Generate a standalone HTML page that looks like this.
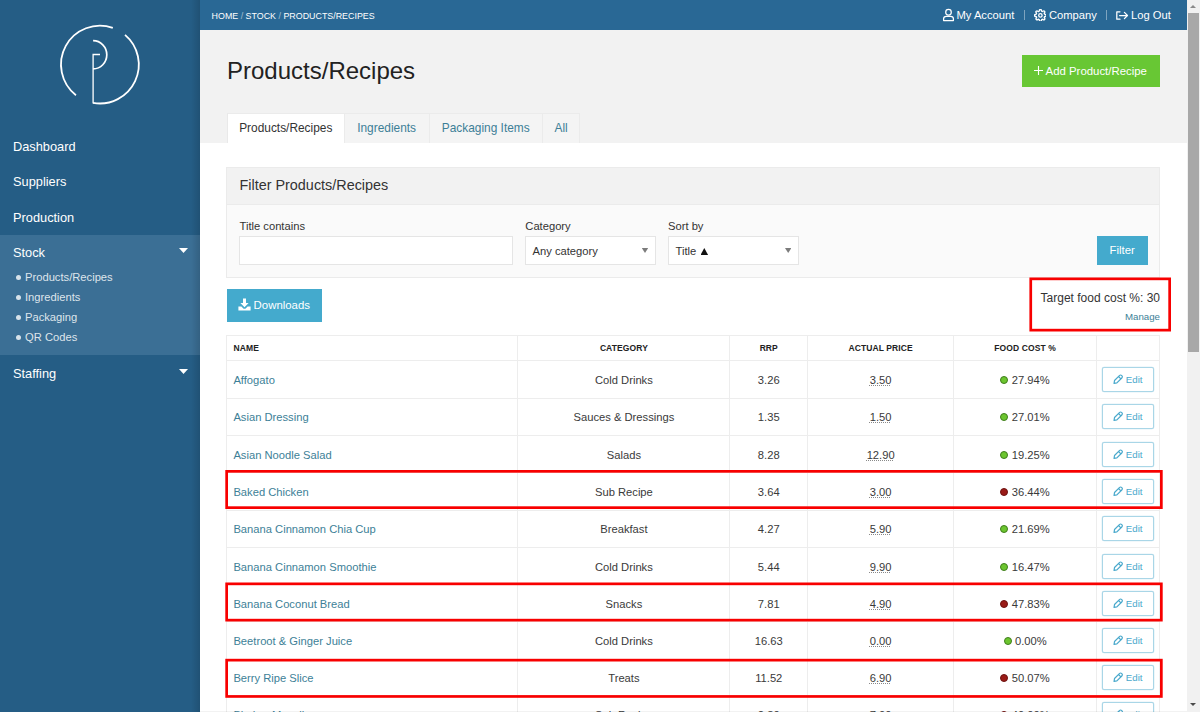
<!DOCTYPE html>
<html>
<head>
<meta charset="utf-8">
<title>Products/Recipes</title>
<style>
*{box-sizing:border-box;margin:0;padding:0}
html,body{width:1200px;height:712px;overflow:hidden;background:#fff;font-family:"Liberation Sans",sans-serif;color:#333}
body{position:relative}
div,span,svg{position:absolute}
#sidebar{left:0;top:0;width:200px;height:712px;background:#255d85;overflow:hidden}
#sidebar .shade{right:0;top:0;width:9px;height:712px;background:linear-gradient(to right,rgba(0,0,0,0),rgba(0,0,0,.13))}
#logo{left:0;top:0;width:200px;height:130px}
.nav{left:13px;color:#fff;font-size:12.8px;line-height:16px;white-space:nowrap}
.caret{left:179px;width:9px;height:4.9px;background:#fff;clip-path:polygon(0 0,100% 0,50% 100%)}
#stockbg{left:0;top:235px;width:200px;height:120px;background:#3b6f95}
.sub{left:25px;color:rgba(255,255,255,.84);font-size:11.2px;line-height:14px;white-space:nowrap}
.bul{left:16px;width:5px;height:5px;border-radius:50%;background:rgba(255,255,255,.8)}
#topbar{left:200px;top:0;width:987px;height:30px;background:#296895}
#crumbs{left:211.6px;top:10px;font-size:8.9px;line-height:12px;white-space:nowrap;color:#fff}
#crumbs span{position:static;opacity:.55}
.tl{top:8px;font-size:11.2px;line-height:14px;white-space:nowrap;color:#fff}
.sep{top:10px;width:1px;height:10px;background:rgba(255,255,255,.4)}
.ico{fill:none;stroke:#fff;stroke-width:1.25;stroke-linecap:round;stroke-linejoin:round}
#head{left:200px;top:30px;width:987px;height:112.5px;background:#f2f2f2}
h1{position:absolute;left:227px;top:57px;font-size:24px;line-height:28px;font-weight:normal;color:#222;white-space:nowrap}
#addbtn{left:1022px;top:55px;width:138px;height:32px;background:#68c734}
#addbtn .t{left:23.6px;top:9px;font-size:11.4px;line-height:14px;color:#fff;white-space:nowrap}
#addbtn svg{left:12px;top:11.2px;width:9px;height:9px}
.tab{top:113px;height:29.5px;font-size:11.9px;line-height:28px;text-align:center;color:#3d7f97;border:1px solid #ebebeb;border-bottom:none;border-left:none;white-space:nowrap;background:#f4f4f4}
.tab.act{background:#fff;color:#333;border-left:1px solid #e9e9e9}
#filter{left:226px;top:167px;width:934px;height:111px;border:1px solid #ebebeb;background:#fafafa}
#filter .hd{left:0;top:0;width:932px;height:37px;background:#f2f2f2;border-bottom:1px solid #ebebeb}
#filter .hd span{left:12.5px;top:8px;font-size:14.4px;line-height:18px;color:#333;white-space:nowrap}
.lbl{top:219px;font-size:11.2px;line-height:14px;color:#333;white-space:nowrap}
.inp{top:235.5px;height:29px;background:#fff;border:1px solid #e5e5e5}
.inp span{left:6.5px;top:7px;font-size:11.2px;line-height:14px;color:#333;white-space:nowrap}
.tri{left:31.5px;top:11.4px;width:7.6px;height:7px;background:#111;clip-path:polygon(50% 0,100% 100%,0 100%)}
.dd{top:11.6px;width:6.4px;height:4.8px;background:#7c7c7c;clip-path:polygon(0 0,100% 0,50% 100%)}
#fbtn{left:1097px;top:235.5px;width:50.5px;height:29px;background:#44aacd}
#fbtn span{left:0;width:50.5px;text-align:center;top:7.5px;font-size:11.4px;line-height:14px;color:#fff}
#dl{left:227px;top:289px;width:95px;height:33px;background:#44aacd}
#dl span{left:26.6px;top:9px;font-size:11.4px;line-height:14px;color:#fff;white-space:nowrap}
#dl svg{left:11px;top:9.4px;width:13px;height:13px}

.tfa{left:1030px;width:130px;text-align:right;top:291px;font-size:12px;line-height:14px;color:#333;white-space:nowrap}
.tfb{left:1030px;width:130px;text-align:right;top:310.5px;font-size:9.7px;line-height:12px;color:#3d7f97;white-space:nowrap}
.hln{left:226px;width:934px;height:1px;background:#ededed}
.vln{top:335px;width:1px;height:380px;background:#ededed}
.th{height:25px;font-size:8.5px;line-height:25px;font-weight:bold;color:#222;text-align:center;white-space:nowrap;letter-spacing:.1px}
.row{left:0;width:1187px;height:37.3px}
.c{top:.8px;height:37.3px;line-height:37.3px;font-size:11.2px;color:#3a3a3a;text-align:center;white-space:nowrap}
.c.nm{color:#3d7f97;text-align:left}
.c u{text-decoration:underline dotted #8a8a8a;text-decoration-thickness:1px;text-underline-offset:1.2px}
.dot{position:static;display:inline-block;width:8px;height:8px;border-radius:50%;vertical-align:middle;margin:-2px 3.4px 0 0}
.g{background:#6cc52f;border:.8px solid #3f7d1c}.r{background:#9a1b17;border:.8px solid #6d1210}
.edit{left:1102px;top:6.4px;width:51.6px;height:24.4px;border:1px solid #a9d6e7;border-radius:2px;background:#fff;box-shadow:0 0 0 .3px #c5e3ef}
.edit span{left:22.8px;top:5.3px;font-size:9.7px;line-height:12px;color:#4aa9cc}
.pen{left:9.8px;top:5.6px;width:10.4px;height:10.4px;fill:none;stroke:#4aa9cc;stroke-width:2.3;stroke-linejoin:round;stroke-linecap:round}
.hl{left:0;top:0;width:1200px;height:712px;fill:none;stroke:#f80000;stroke-width:2.7}
#sb{left:1187px;top:0;width:13px;height:712px;background:#f1f1f1}
#sb .thm{left:1px;top:13px;width:11px;height:338.5px;background:#a8a8a8}
#sb .up{left:3px;top:5px;width:0;height:0;border-left:3.5px solid transparent;border-right:3.5px solid transparent;border-bottom:3.5px solid #8a8a8a}
#sb .dn{left:3px;top:703px;width:0;height:0;border-left:3.5px solid transparent;border-right:3.5px solid transparent;border-top:3.5px solid #4a4a4a}
#botline{left:200px;top:711px;width:987px;height:1px;background:rgba(0,0,0,.05)}
</style>
</head>
<body>
<div id="sidebar">
  <svg id="logo" viewBox="0 0 200 130" fill="none" stroke="#fff">
    <path stroke-width="1.8" d="M112.82 27.86 A38.9 38.9 0 0 0 75.95 95.20"/>
    <path stroke-width="1.8" d="M93.10 102.85 A38.9 38.9 0 0 0 125.01 34.84"/>
    <path stroke-width="1.3" d="M93.10 103.55 V54.5 H100"/>
    <path stroke-width="1.7" d="M93.1 40.7 A13.7 14.1 0 0 1 93.1 68.9"/>
  </svg>
  <div id="stockbg"></div>
  <div class="nav" style="top:138.7px">Dashboard</div>
  <div class="nav" style="top:174.3px">Suppliers</div>
  <div class="nav" style="top:209.6px">Production</div>
  <div class="nav" style="top:245px">Stock</div><div class="caret" style="top:248px"></div>
  <div class="bul" style="top:274.6px"></div><div class="sub" style="top:269.5px">Products/Recipes</div>
  <div class="bul" style="top:294.7px"></div><div class="sub" style="top:289.6px">Ingredients</div>
  <div class="bul" style="top:314.8px"></div><div class="sub" style="top:309.7px">Packaging</div>
  <div class="bul" style="top:334.9px"></div><div class="sub" style="top:329.8px">QR Codes</div>
  <div class="nav" style="top:365.5px">Staffing</div><div class="caret" style="top:369px"></div>
  <div class="shade"></div>
</div>
<div id="topbar"></div>
<div id="crumbs">HOME <span>/</span> STOCK <span>/</span> PRODUCTS/RECIPES</div>
<svg class="ico" style="left:942px;top:8px;width:13px;height:14px" viewBox="0 0 13 14"><circle cx="6.5" cy="4.2" r="2.8"/><path d="M1.6 12.6 V10.8 Q1.6 8.3 4.4 8.3 H8.6 Q11.4 8.3 11.4 10.8 V12.6 Z"/></svg>
<div class="tl" style="left:956.5px">My Account</div>
<div class="sep" style="left:1024px"></div>
<svg class="ico" style="left:1033.6px;top:8.6px;width:12.8px;height:12.8px;stroke-width:2.5" viewBox="0 0 24 24"><circle cx="12" cy="12" r="3.2"/><path d="M19.4 15a1.65 1.65 0 0 0 .33 1.82l.06.06a2 2 0 1 1-2.83 2.83l-.06-.06a1.65 1.65 0 0 0-1.82-.33 1.65 1.65 0 0 0-1 1.51V21a2 2 0 0 1-4 0v-.09A1.65 1.65 0 0 0 9 19.4a1.65 1.65 0 0 0-1.82.33l-.06.06a2 2 0 1 1-2.83-2.83l.06-.06a1.65 1.65 0 0 0 .33-1.82 1.65 1.65 0 0 0-1.51-1H3a2 2 0 0 1 0-4h.09A1.65 1.65 0 0 0 4.6 9a1.65 1.65 0 0 0-.33-1.82l-.06-.06a2 2 0 1 1 2.83-2.83l.06.06a1.65 1.65 0 0 0 1.82.33H9a1.65 1.65 0 0 0 1-1.51V3a2 2 0 0 1 4 0v.09a1.65 1.65 0 0 0 1 1.51 1.65 1.65 0 0 0 1.82-.33l.06-.06a2 2 0 1 1 2.83 2.83l-.06.06a1.65 1.65 0 0 0-.33 1.82V9a1.65 1.65 0 0 0 1.51 1H21a2 2 0 0 1 0 4h-.09a1.65 1.65 0 0 0-1.51 1z"/></svg>
<div class="tl" style="left:1049px">Company</div>
<div class="sep" style="left:1106px"></div>
<svg class="ico" style="left:1116px;top:10.5px;width:13px;height:9px" viewBox="0 0 13 9"><path d="M4 0.8 H0.8 V8.2 H4"/><path d="M3.6 4.5 H11.4 M8.4 1.4 L11.5 4.5 L8.4 7.6"/></svg>
<div class="tl" style="left:1131px">Log Out</div>
<div id="head"></div>
<h1>Products/Recipes</h1>
<div id="addbtn"><svg viewBox="0 0 9 9" stroke="#fff" stroke-width="1.1"><path d="M4.5 0 V9 M0 4.5 H9"/></svg><div class="t">Add Product/Recipe</div></div>
<div class="tab act" style="left:227px;width:117.5px">Products/Recipes</div>
<div class="tab" style="left:344.5px;width:85.2px">Ingredients</div>
<div class="tab" style="left:429.7px;width:113.1px">Packaging Items</div>
<div class="tab" style="left:542.8px;width:37.6px">All</div>
<div id="filter"><div class="hd"><span>Filter Products/Recipes</span></div></div>
<div class="lbl" style="left:239.5px">Title contains</div>
<div class="inp" style="left:239px;width:274px"></div>
<div class="lbl" style="left:525.3px">Category</div>
<div class="inp" style="left:525px;width:130.6px"><span>Any category</span><div class="dd" style="left:115.8px"></div></div>
<div class="lbl" style="left:668px">Sort by</div>
<div class="inp" style="left:668px;width:130.8px"><span>Title</span><div class="tri"></div><div class="dd" style="left:116px"></div></div>
<div id="fbtn"><span>Filter</span></div>
<div id="dl"><svg viewBox="0 0 13 13" fill="#fff"><path d="M5 0.5 H8 V5 H10.6 L6.5 9.2 L2.4 5 H5 Z"/><path d="M0.4 8.6 H3.4 L5.6 10.8 H7.4 L9.6 8.6 H12.6 V12.4 H0.4 Z"/></svg><span>Downloads</span></div>
<div class="tfa">Target food cost %: 30</div>
<div class="tfb">Manage</div>
<div id="tbl">
<div class="hln" style="top:335px"></div>
<div class="hln" style="top:360px"></div>
<div class="hln" style="top:398px"></div>
<div class="hln" style="top:435px"></div>
<div class="hln" style="top:472px"></div>
<div class="hln" style="top:510px"></div>
<div class="hln" style="top:547px"></div>
<div class="hln" style="top:584px"></div>
<div class="hln" style="top:621px"></div>
<div class="hln" style="top:659px"></div>
<div class="hln" style="top:696px"></div>
<div class="hln" style="top:733px"></div>
<div class="vln" style="left:226.3px"></div>
<div class="vln" style="left:517.1px"></div>
<div class="vln" style="left:729.4px"></div>
<div class="vln" style="left:806.9px"></div>
<div class="vln" style="left:953.2px"></div>
<div class="vln" style="left:1095.8px"></div>
<div class="vln" style="left:1159.0px"></div>
<div class="th" style="left:233.5px;top:335.7px;text-align:left">NAME</div>
<div class="th" style="left:517.8px;width:212.2px;top:335.7px">CATEGORY</div>
<div class="th" style="left:730.0px;width:77.5px;top:335.7px">RRP</div>
<div class="th" style="left:807.5px;width:146.3px;top:335.7px">ACTUAL PRICE</div>
<div class="th" style="left:953.8px;width:142.6px;top:335.7px">FOOD COST %</div>
<div class="row" style="top:361.00px"><div class="c nm" style="left:233.4px">Affogato</div><div class="c" style="left:517.8px;width:212.2px">Cold Drinks</div><div class="c" style="left:730.0px;width:77.5px">3.26</div><div class="c" style="left:807.5px;width:146.3px"><u>3.50</u></div><div class="c" style="left:953.8px;width:142.6px"><span class="dot g"></span>27.94%</div><div class="edit"><svg class="pen" viewBox="0 0 20 20"><path d="M2 18 L2.9 12.5 L12.3 3.1 Q14.6 0.8 16.9 3.1 Q19.2 5.4 16.9 7.7 L7.5 17.1 Z M10.7 4.9 L15.1 9.3"/></svg><span>Edit</span></div></div>
<div class="row" style="top:398.00px"><div class="c nm" style="left:233.4px">Asian Dressing</div><div class="c" style="left:517.8px;width:212.2px">Sauces &amp; Dressings</div><div class="c" style="left:730.0px;width:77.5px">1.35</div><div class="c" style="left:807.5px;width:146.3px"><u>1.50</u></div><div class="c" style="left:953.8px;width:142.6px"><span class="dot g"></span>27.01%</div><div class="edit"><svg class="pen" viewBox="0 0 20 20"><path d="M2 18 L2.9 12.5 L12.3 3.1 Q14.6 0.8 16.9 3.1 Q19.2 5.4 16.9 7.7 L7.5 17.1 Z M10.7 4.9 L15.1 9.3"/></svg><span>Edit</span></div></div>
<div class="row" style="top:436.00px"><div class="c nm" style="left:233.4px">Asian Noodle Salad</div><div class="c" style="left:517.8px;width:212.2px">Salads</div><div class="c" style="left:730.0px;width:77.5px">8.28</div><div class="c" style="left:807.5px;width:146.3px"><u>12.90</u></div><div class="c" style="left:953.8px;width:142.6px"><span class="dot g"></span>19.25%</div><div class="edit"><svg class="pen" viewBox="0 0 20 20"><path d="M2 18 L2.9 12.5 L12.3 3.1 Q14.6 0.8 16.9 3.1 Q19.2 5.4 16.9 7.7 L7.5 17.1 Z M10.7 4.9 L15.1 9.3"/></svg><span>Edit</span></div></div>
<div class="row" style="top:473.00px"><div class="c nm" style="left:233.4px">Baked Chicken</div><div class="c" style="left:517.8px;width:212.2px">Sub Recipe</div><div class="c" style="left:730.0px;width:77.5px">3.64</div><div class="c" style="left:807.5px;width:146.3px"><u>3.00</u></div><div class="c" style="left:953.8px;width:142.6px"><span class="dot r"></span>36.44%</div><div class="edit"><svg class="pen" viewBox="0 0 20 20"><path d="M2 18 L2.9 12.5 L12.3 3.1 Q14.6 0.8 16.9 3.1 Q19.2 5.4 16.9 7.7 L7.5 17.1 Z M10.7 4.9 L15.1 9.3"/></svg><span>Edit</span></div></div>
<div class="row" style="top:510.00px"><div class="c nm" style="left:233.4px">Banana Cinnamon Chia Cup</div><div class="c" style="left:517.8px;width:212.2px">Breakfast</div><div class="c" style="left:730.0px;width:77.5px">4.27</div><div class="c" style="left:807.5px;width:146.3px"><u>5.90</u></div><div class="c" style="left:953.8px;width:142.6px"><span class="dot g"></span>21.69%</div><div class="edit"><svg class="pen" viewBox="0 0 20 20"><path d="M2 18 L2.9 12.5 L12.3 3.1 Q14.6 0.8 16.9 3.1 Q19.2 5.4 16.9 7.7 L7.5 17.1 Z M10.7 4.9 L15.1 9.3"/></svg><span>Edit</span></div></div>
<div class="row" style="top:548.00px"><div class="c nm" style="left:233.4px">Banana Cinnamon Smoothie</div><div class="c" style="left:517.8px;width:212.2px">Cold Drinks</div><div class="c" style="left:730.0px;width:77.5px">5.44</div><div class="c" style="left:807.5px;width:146.3px"><u>9.90</u></div><div class="c" style="left:953.8px;width:142.6px"><span class="dot g"></span>16.47%</div><div class="edit"><svg class="pen" viewBox="0 0 20 20"><path d="M2 18 L2.9 12.5 L12.3 3.1 Q14.6 0.8 16.9 3.1 Q19.2 5.4 16.9 7.7 L7.5 17.1 Z M10.7 4.9 L15.1 9.3"/></svg><span>Edit</span></div></div>
<div class="row" style="top:585.00px"><div class="c nm" style="left:233.4px">Banana Coconut Bread</div><div class="c" style="left:517.8px;width:212.2px">Snacks</div><div class="c" style="left:730.0px;width:77.5px">7.81</div><div class="c" style="left:807.5px;width:146.3px"><u>4.90</u></div><div class="c" style="left:953.8px;width:142.6px"><span class="dot r"></span>47.83%</div><div class="edit"><svg class="pen" viewBox="0 0 20 20"><path d="M2 18 L2.9 12.5 L12.3 3.1 Q14.6 0.8 16.9 3.1 Q19.2 5.4 16.9 7.7 L7.5 17.1 Z M10.7 4.9 L15.1 9.3"/></svg><span>Edit</span></div></div>
<div class="row" style="top:622.00px"><div class="c nm" style="left:233.4px">Beetroot &amp; Ginger Juice</div><div class="c" style="left:517.8px;width:212.2px">Cold Drinks</div><div class="c" style="left:730.0px;width:77.5px">16.63</div><div class="c" style="left:807.5px;width:146.3px"><u>0.00</u></div><div class="c" style="left:953.8px;width:142.6px"><span class="dot g"></span>0.00%</div><div class="edit"><svg class="pen" viewBox="0 0 20 20"><path d="M2 18 L2.9 12.5 L12.3 3.1 Q14.6 0.8 16.9 3.1 Q19.2 5.4 16.9 7.7 L7.5 17.1 Z M10.7 4.9 L15.1 9.3"/></svg><span>Edit</span></div></div>
<div class="row" style="top:659.00px"><div class="c nm" style="left:233.4px">Berry Ripe Slice</div><div class="c" style="left:517.8px;width:212.2px">Treats</div><div class="c" style="left:730.0px;width:77.5px">11.52</div><div class="c" style="left:807.5px;width:146.3px"><u>6.90</u></div><div class="c" style="left:953.8px;width:142.6px"><span class="dot r"></span>50.07%</div><div class="edit"><svg class="pen" viewBox="0 0 20 20"><path d="M2 18 L2.9 12.5 L12.3 3.1 Q14.6 0.8 16.9 3.1 Q19.2 5.4 16.9 7.7 L7.5 17.1 Z M10.7 4.9 L15.1 9.3"/></svg><span>Edit</span></div></div>
<div class="row" style="top:696.00px"><div class="c nm" style="left:233.4px">Bircher Muesli</div><div class="c" style="left:517.8px;width:212.2px">Sub Recipe</div><div class="c" style="left:730.0px;width:77.5px">2.80</div><div class="c" style="left:807.5px;width:146.3px"><u>7.00</u></div><div class="c" style="left:953.8px;width:142.6px"><span class="dot r"></span>40.00%</div><div class="edit"><svg class="pen" viewBox="0 0 20 20"><path d="M2 18 L2.9 12.5 L12.3 3.1 Q14.6 0.8 16.9 3.1 Q19.2 5.4 16.9 7.7 L7.5 17.1 Z M10.7 4.9 L15.1 9.3"/></svg><span>Edit</span></div></div>
</div>
<svg class="hl" viewBox="0 0 1200 712"><rect x="226.65" y="471.35" width="934.70" height="36.30"/><rect x="226.65" y="583.85" width="934.70" height="36.30"/><rect x="226.65" y="660.15" width="934.70" height="36.30"/><rect x="1030.75" y="278.85" width="138.90" height="51.30"/></svg>
<div id="sb"><div class="up"></div><div class="thm"></div><div class="dn"></div></div>
<div id="botline"></div>
</body>
</html>
